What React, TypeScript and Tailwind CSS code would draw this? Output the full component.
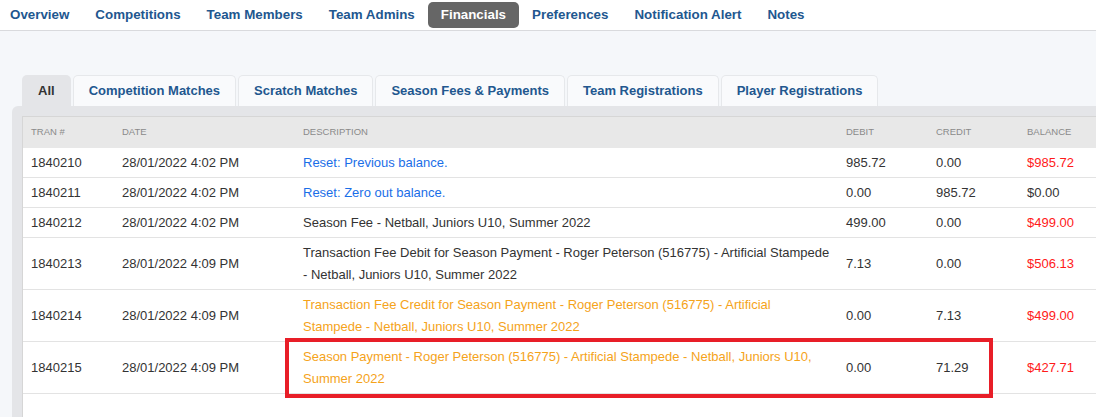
import * as React from "react"

const navItems = [
  "Overview",
  "Competitions",
  "Team Members",
  "Team Admins",
  "Financials",
  "Preferences",
  "Notification Alert",
  "Notes",
]

const tabs = [
  "All",
  "Competition Matches",
  "Scratch Matches",
  "Season Fees & Payments",
  "Team Registrations",
  "Player Registrations",
]

type Row = {
  tran: string
  date: string
  desc: string
  tone: "link" | "plain" | "warn"
  debit: string
  credit: string
  balance: string
  owing: boolean
}

const rows: Row[] = [
  { tran: "1840210", date: "28/01/2022 4:02 PM", desc: "Reset: Previous balance.", tone: "link", debit: "985.72", credit: "0.00", balance: "$985.72", owing: true },
  { tran: "1840211", date: "28/01/2022 4:02 PM", desc: "Reset: Zero out balance.", tone: "link", debit: "0.00", credit: "985.72", balance: "$0.00", owing: false },
  { tran: "1840212", date: "28/01/2022 4:02 PM", desc: "Season Fee - Netball, Juniors U10, Summer 2022", tone: "plain", debit: "499.00", credit: "0.00", balance: "$499.00", owing: true },
  { tran: "1840213", date: "28/01/2022 4:09 PM", desc: "Transaction Fee Debit for Season Payment - Roger Peterson (516775) - Artificial Stampede - Netball, Juniors U10, Summer 2022", tone: "plain", debit: "7.13", credit: "0.00", balance: "$506.13", owing: true },
  { tran: "1840214", date: "28/01/2022 4:09 PM", desc: "Transaction Fee Credit for Season Payment - Roger Peterson (516775) - Artificial Stampede - Netball, Juniors U10, Summer 2022", tone: "warn", debit: "0.00", credit: "7.13", balance: "$499.00", owing: true },
  { tran: "1840215", date: "28/01/2022 4:09 PM", desc: "Season Payment - Roger Peterson (516775) - Artificial Stampede - Netball, Juniors U10, Summer 2022", tone: "warn", debit: "0.00", credit: "71.29", balance: "$427.71", owing: true },
]

const toneClass = {
  link: "text-[#1a6ee8]",
  plain: "text-[#333333]",
  warn: "text-[#f5a31a]",
}

export default function App() {
  return (
    <div className="relative h-[417px] overflow-hidden bg-[#f5f7fa] font-['Liberation_Sans',Arial,sans-serif]">
      {/* Top nav */}
      <nav className="flex h-[31px] items-center border-b border-[#d9dadd] bg-white">
        <div className="-ml-[3px] flex items-center">
          {navItems.map((item) => (
            <a
              key={item}
              className={
                item === "Financials"
                  ? "rounded-[5px] bg-[#666666] px-[13px] py-[5px] text-[13.35px] font-bold leading-[16px] text-white"
                  : "px-[13px] py-[5px] text-[13.35px] font-bold leading-[16px] text-[#22578f]"
              }
            >
              {item}
            </a>
          ))}
        </div>
      </nav>

      {/* Sub tabs */}
      <div className="ml-[22px] mt-[44px] flex gap-[2px]">
        {tabs.map((tab, i) => (
          <div
            key={tab}
            className={
              i === 0
                ? "flex h-[31px] items-center rounded-t-[5px] bg-[#e4e5e8] px-[16px] text-[13px] font-bold text-[#333333]"
                : "flex h-[31px] items-center rounded-t-[5px] border border-b-0 border-[#e6e8eb] bg-[#f9fafc] px-[15px] text-[13px] font-bold text-[#22578f]"
            }
          >
            {tab}
          </div>
        ))}
      </div>

      {/* Panel */}
      <div className="ml-[12px] w-[1120px] rounded-tl-[6px] bg-[#e4e5e8] pl-[10px] pt-[10px]">
        <div className="border border-[#d6d6d6] bg-white pb-[40px]">
          <table className="w-[1100px] table-fixed border-collapse text-left">
            <colgroup>
              <col className="w-[91px]" />
              <col className="w-[181px]" />
              <col className="w-[543px]" />
              <col className="w-[90px]" />
              <col className="w-[91px]" />
              <col />
            </colgroup>
            <thead>
              <tr className="h-[31px] bg-[#e8e8e8] text-[9.5px] uppercase text-[#8a8a8a]">
                <th className="px-[8px] font-normal">Tran #</th>
                <th className="px-[8px] font-normal">Date</th>
                <th className="px-[8px] font-normal">Description</th>
                <th className="px-[8px] font-normal">Debit</th>
                <th className="px-[8px] font-normal">Credit</th>
                <th className="px-[8px] font-normal">Balance</th>
              </tr>
            </thead>
            <tbody className="text-[13px] leading-[22px] text-[#333333]">
              {rows.map((r) => (
                <tr key={r.tran} className="border-b border-[#e3e3e3]">
                  <td className="px-[8px] pb-[3px] pt-[4px] align-middle">{r.tran}</td>
                  <td className="px-[8px] pb-[3px] pt-[4px] align-middle">{r.date}</td>
                  <td className={`pb-[3px] pl-[8px] pr-[5px] pt-[4px] align-middle ${toneClass[r.tone]}`}>{r.desc}</td>
                  <td className="px-[8px] pb-[3px] pt-[4px] align-middle">{r.debit}</td>
                  <td className="px-[8px] pb-[3px] pt-[4px] align-middle">{r.credit}</td>
                  <td className={`px-[8px] pb-[3px] pt-[4px] align-middle ${r.owing ? "text-[#ff1a1a]" : ""}`}>{r.balance}</td>
                </tr>
              ))}
            </tbody>
          </table>
        </div>
      </div>

      {/* Highlight annotation */}
      <div className="pointer-events-none absolute left-[285px] top-[338px] h-[60px] w-[708px] border-[4px] border-[#e81e28]" />
    </div>
  )
}
